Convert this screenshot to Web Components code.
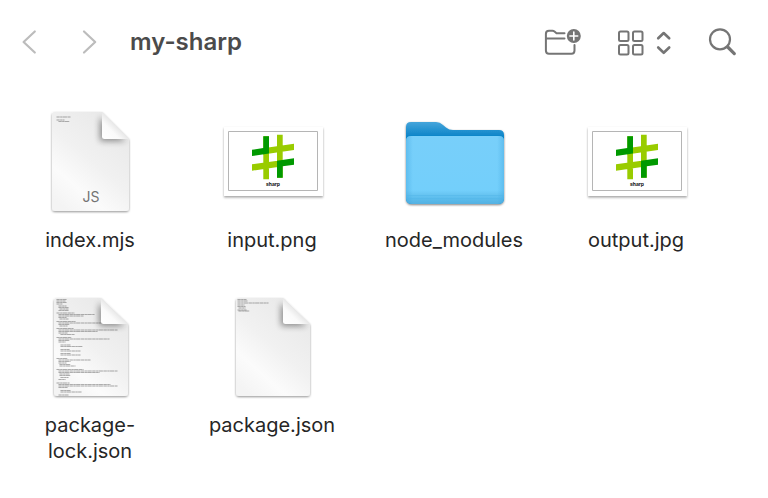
<!DOCTYPE html>
<html lang="en">
<head>
<meta charset="utf-8">
<title>my-sharp</title>
<style>
  body { margin: 0; background: #fff; color: #262626; font-family: Inter, "Liberation Sans", sans-serif; }
</style>
</head>
<body>
<finder-window>
  <finder-toolbar slot="toolbar">my-sharp</finder-toolbar>
  <file-item kind="script">index.mjs</file-item>
  <file-item kind="image">input.png</file-item>
  <file-item kind="folder">node_modules</file-item>
  <file-item kind="image">output.jpg</file-item>
  <file-item kind="listing">package-lock.json</file-item>
  <file-item kind="json">package.json</file-item>
</finder-window>

<script>
class FinderWindow extends HTMLElement {
  constructor() {
    super();
    this.attachShadow({ mode: 'open' }).innerHTML = `
      <style>
        :host { display: block; }
        main { display: grid; grid-template-columns: repeat(4, minmax(0, 1fr)); row-gap: 38px; margin-left: -1px; padding: 22px 41px 22px 0; }
      </style>
      <slot name="toolbar"></slot>
      <main><slot></slot></main>`;
  }
}

class FinderToolbar extends HTMLElement {
  constructor() {
    super();
    this.attachShadow({ mode: 'open' }).innerHTML = `
      <style>
        :host { display: block; }
        header { display: flex; align-items: center; height: 84px; padding: 0 30px 0 22px; }
        button { display: flex; padding: 0; border: 0; background: none; color: #757575; }
        button:disabled { color: #bcbcbc; }
        nav { display: flex; gap: 44px; }
        h1 { flex: 1; margin: 0 0 0 32px; font-size: 24px; line-height: 32px; font-weight: 600; color: #4b4b4b; }
        .tools { display: flex; align-items: center; gap: 35px; }
        svg { display: block; fill: none; stroke: currentColor; stroke-linecap: round; stroke-linejoin: round; }
      </style>
      <header>
        <nav aria-label="History">
          <button disabled aria-label="Back"><svg width="16" height="28" viewBox="0 0 16 28" stroke-width="2.2"><path d="M12.8 3.5 1.6 14l11.2 10.5"/></svg></button>
          <button disabled aria-label="Forward"><svg width="16" height="28" viewBox="0 0 16 28" stroke-width="2.2"><path d="M2 3.5 13.2 14 2 24.500"/></svg></button>
        </nav>
        <h1><slot></slot></h1>
        <div class="tools">
          <button aria-label="New folder"><svg width="38" height="30" viewBox="0 0 38 30" stroke-width="2">
            <path d="M20.500 6.200H12.500L10.500 4.500Q9.600 3.800 8.500 3.800H5Q1.900 3.800 1.900 7V23.500Q1.900 26.700 5 26.700H27.500Q30.500 26.700 30.500 23.500V18M2 11.500H20.500"/>
            <circle cx="29.800" cy="9" r="7" fill="currentColor" stroke="none"/>
            <path d="M29.800 5.100v7.800M25.900 9h7.800" stroke="#fff" stroke-width="1.600"/></svg></button>
          <button aria-label="View as icons"><svg width="56" height="30" viewBox="0 0 56 30" stroke-width="2">
            <rect x="2" y="4.500" width="9.500" height="9.500" rx="1.500"/><rect x="16" y="4.500" width="9.500" height="9.500" rx="1.500"/>
            <rect x="2" y="18" width="9.500" height="9.500" rx="1.500"/><rect x="16" y="18" width="9.500" height="9.500" rx="1.500"/>
            <path d="M41.200 11.300 46.700 6 52.200 11.300M41.200 20.500 46.700 25.800 52.200 20.500" stroke-width="2.600"/></svg></button>
          <button aria-label="Search"><svg width="30" height="30" viewBox="0 0 30 30" stroke-width="2.200">
            <circle cx="12" cy="12.300" r="10"/><path d="m19.700 20 6.600 6.600" stroke-width="3.200"/></svg></button>
        </div>
      </header>`;
  }
}

/* Each row is [top, left, width] in icon units. */
const rowsToPath = rows => rows.map(([y, x, w]) => `M${x - 0.5} ${y}h${w}`).join('');

const page = (left, right, top, fold, extra) => `
  <defs>
    <linearGradient id="paper" x1="0.800" y1="0.100" x2="0.200" y2="1">
      <stop offset="0" stop-color="#e9e9e9"/><stop offset=".45" stop-color="#f1f1f1"/><stop offset=".75" stop-color="#fbfbfb"/><stop offset="1" stop-color="#f4f4f4"/>
    </linearGradient>
    <linearGradient id="curl" x1="0" y1="1" x2=".55" y2=".45">
      <stop offset="0" stop-color="#fff"/><stop offset=".6" stop-color="#fafafa"/><stop offset="1" stop-color="#e3e3e3"/>
    </linearGradient>
    <clipPath id="sheet"><path d="M${left + 3} ${top}H${fold}L${right} 33V102q0 3-3 3H${left + 3}q-3 0-3-3V${top + 3}q0-3 3-3Z"/></clipPath>
    <filter id="drop" x="-20%" y="-20%" width="140%" height="140%"><feDropShadow dx="0" dy="1" stdDeviation="1.200" flood-opacity=".42"/></filter>
    <filter id="soft" x="-50%" y="-50%" width="200%" height="200%"><feGaussianBlur stdDeviation="3"/></filter>
  </defs>
  <path filter="url(#drop)" fill="url(#paper)" d="M${left + 3} ${top}H${fold}L${right} 33V102q0 3-3 3H${left + 3}q-3 0-3-3V${top + 3}q0-3 3-3Z"/>
  <g clip-path="url(#sheet)">${extra}
    <path filter="url(#soft)" fill="#000" opacity=".42" d="M${fold - 2} ${top + 5}V35H${right - 3}Z"/>
  </g>
  <path fill="url(#curl)" d="M${fold} ${top}V30.500q0 2.500 2.500 2.500H${right}Z"/>`;

const code = rows => `<path d="${rowsToPath(rows)}" stroke="#777" stroke-width="1.100" opacity=".3"/>
  <path d="${rowsToPath(rows)}" stroke="#777" stroke-width="1" stroke-dasharray="3 .8 2 .6 4 .9" opacity=".4"/>`;

const scriptRows = [[11, 22, 14], [14, 22, 8], [15.500, 24, 11]];
const jsonRows = [[8.500, 21, 9], [10, 21, 10], [12, 21, 31], [14, 21, 7], [15.500, 21, 8], [17, 22, 7], [19, 21, 9], [20, 22, 11]];
const listingRows = [
  [8.500, 22, 10], [10, 22, 9], [11.500, 22, 10], [13, 22, 6],
  [15, 24, 8], [16.500, 24, 10], [18, 25, 9], [19.500, 24, 10],
  [22, 22, 18], [23.500, 24, 36], [25, 24, 25], [26.500, 24, 8], [28, 25, 9],
  [30.500, 22, 19], [32, 24, 50], [33.500, 24, 11], [35, 25, 8],
  [37.500, 22, 17], [39, 24, 59], [40.500, 24, 39], [42, 24, 9], [43.500, 26, 14],
  [46.500, 22, 15], [48, 24, 51], [49.500, 24, 11], [51, 24, 7],
  [54, 26, 10], [55.500, 26, 22], [58.500, 26, 9], [60, 26, 20], [62.500, 26, 10], [64, 26, 20],
  [67.500, 22, 11], [69, 24, 32], [70.500, 24, 12], [72, 24, 8], [73.500, 25, 11], [75, 25, 16],
  [78.500, 22, 27], [80, 24, 59], [81.500, 24, 41], [83, 25, 10], [84.500, 25, 11], [86.500, 26, 8], [88.500, 24, 7],
  [92, 22, 13], [93.500, 24, 52], [95, 24, 59], [96.500, 24, 9],
  [99.500, 26, 10], [101, 26, 21], [104, 24, 10]
];

const art = {
  script: () => page(17, 94, 6, 67, code(scriptRows)) +
    `<text x="56" y="96" text-anchor="middle" font-size="14" fill="#737373">JS</text>`,
  json: () => page(19, 93, 7, 66, code(jsonRows)),
  listing: () => page(19, 93, 7, 66, code(listingRows)),
  image: () => `
    <defs><filter id="drop" x="-20%" y="-20%" width="140%" height="140%"><feDropShadow dx="0" dy="1.500" stdDeviation="1.200" flood-opacity=".36"/></filter></defs>
    <path filter="url(#drop)" fill="#fff" d="M7 21H106V90H7Z"/>
    <path fill="#fff" stroke="#b5b5b5" d="M11.500 25.500H100.500V84.500H11.500Z"/>
    <path fill="#9c0" d="M46.300 30.300H52V73.300H46.300ZM60 28.700H65.700V71.700H60ZM46 42.200 77 37.700V44L46 48.500ZM35 58.300 66 53.900V60.200L35 64.700Z"/>
    <path fill="#090" d="M46.300 30.300H52V47.600L35 50V43.700L46.300 42.100ZM60 54.700 77 52.300V58.700L65.700 60.300V71.700H60Z"/>
    <text x="56" y="80" text-anchor="middle" font-size="5" font-weight="700" fill="#111">sharp</text>`,
  folder: () => `
    <defs>
      <linearGradient id="back" x1="0" y1="0" x2="0" y2="1"><stop offset="0" stop-color="#45a5db"/><stop offset=".16" stop-color="#1187ca"/></linearGradient>
      <linearGradient id="front" x1="0" y1="0" x2="0" y2="1">
        <stop offset="0" stop-color="#78cffa"/><stop offset=".8" stop-color="#73cffb"/><stop offset=".86" stop-color="#68c5f2"/><stop offset=".92" stop-color="#5bbcec"/><stop offset="1" stop-color="#54b1e2"/>
      </linearGradient>
      <linearGradient id="edge"><stop offset="0" stop-color="#3da3dd" stop-opacity=".4"/><stop offset=".07" stop-color="#3da3dd" stop-opacity="0"/><stop offset=".93" stop-color="#3da3dd" stop-opacity="0"/><stop offset="1" stop-color="#3da3dd" stop-opacity=".4"/></linearGradient>
      <filter id="drop" x="-20%" y="-20%" width="140%" height="140%"><feDropShadow dx="0" dy="1" stdDeviation=".8" flood-opacity=".5"/></filter>
    </defs>
    <path filter="url(#drop)" fill="url(#back)" d="M12 16H37Q41 16 44 19L47 21.500Q50 24 54 24H100Q105 24 105 29V92Q105 98 99 98H13Q7 98 7 92V21Q7 16 12 16Z"/>
    <path fill="url(#front)" d="M12 30H100Q105 30 105 35V92Q105 98 99 98H13Q7 98 7 92V35Q7 30 12 30Z"/>
    <path fill="url(#edge)" d="M12 30H100Q105 30 105 35V92Q105 98 99 98H13Q7 98 7 92V35Q7 30 12 30Z"/>
    <path fill="none" stroke="#52b5e8" stroke-width=".7" opacity=".7" d="M7 89.500H105M7 92.500H105"/>`
};

class FileItem extends HTMLElement {
  constructor() {
    super();
    this.attachShadow({ mode: 'open' });
  }
  connectedCallback() {
    this.shadowRoot.innerHTML = `
      <style>
        :host { display: block; }
        button { display: flex; flex-direction: column; align-items: center; gap: 11px; width: 100%; padding: 0; border: 0; background: none; color: inherit; font: inherit; font-size: 20px; line-height: 26px; }
        svg { display: block; width: 110px; height: 110px; fill: none; }
        .name { max-width: 140px; }
      </style>
      <button><svg viewBox="0 0 110 110" aria-hidden="true">${art[this.getAttribute('kind')]()}</svg><span class="name"><slot></slot></span></button>`;
  }
}

customElements.define('finder-window', FinderWindow);
customElements.define('finder-toolbar', FinderToolbar);
customElements.define('file-item', FileItem);
</script>
</body>
</html>
